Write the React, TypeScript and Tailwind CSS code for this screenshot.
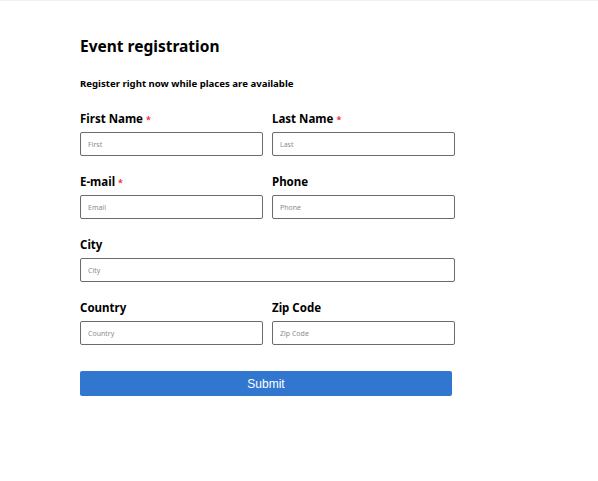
import React from "react";

const font = { fontFamily: '"Noto Sans", "Open Sans", sans-serif' };

function Field({ label, placeholder, required }: { label: string; placeholder: string; required?: boolean }) {
  return (
    <div className="flex flex-col">
      <label className="flex h-[16px] items-center text-[11.5px] font-bold leading-none text-black">
        {label}
        {required && <span className="ml-[3px] text-[9px] text-red-500">*</span>}
      </label>
      <input
        placeholder={placeholder}
        className="mt-[5px] h-[24px] w-full rounded-[2px] border border-[#6b6b6b] px-[7px] text-[7px] placeholder:text-[#8c8c8c] outline-none"
      />
    </div>
  );
}

export default function App() {
  return (
    <div className="min-h-[481px] w-[598px] bg-white border-t border-[#f0f0f0]" style={font}>
      <div className="ml-[80px] w-[375px] pt-[34px]">
        <h1 className="text-[15.5px] font-bold leading-[22px] text-black">Event registration</h1>
        <p className="mt-[20px] text-[9.6px] font-bold leading-[14px] text-black">
          Register right now while places are available
        </p>
        <form className="mt-[20px] flex flex-col gap-[18px]" onSubmit={(e) => e.preventDefault()}>
          <div className="grid grid-cols-2 gap-x-[9px]">
            <Field label="First Name" placeholder="First" required />
            <Field label="Last Name" placeholder="Last" required />
          </div>
          <div className="grid grid-cols-2 gap-x-[9px]">
            <Field label="E-mail" placeholder="Email" required />
            <Field label="Phone" placeholder="Phone" />
          </div>
          <Field label="City" placeholder="City" />
          <div className="grid grid-cols-2 gap-x-[9px]">
            <Field label="Country" placeholder="Country" />
            <Field label="Zip Code" placeholder="Zip Code" />
          </div>
          <button
            type="submit"
            className="mt-[8px] h-[25px] w-[372px] rounded-[2px] bg-[#3177d0] text-[12px] text-white"
            style={{ fontFamily: '"Liberation Sans", Arial, sans-serif' }}
          >
            Submit
          </button>
        </form>
      </div>
    </div>
  );
}
